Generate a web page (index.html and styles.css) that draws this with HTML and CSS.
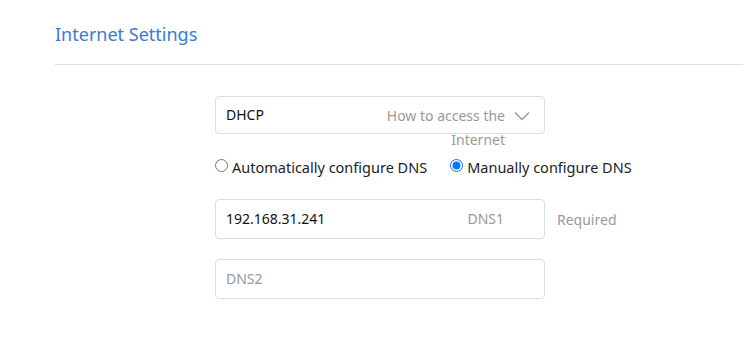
FILE: index.html
```html
<!DOCTYPE html>
<html lang="en">
<head>
    <meta charset="UTF-8">
    <meta name="viewport" content="width=device-width, initial-scale=1.0">
    <title>Internet Settings</title>
    <link rel="stylesheet" href="styles.css">
</head>
<body>
    <div class="page">
        <h1 class="page-title">Internet Settings</h1>
        <div class="divider"></div>

        <form class="settings-form">
            <div class="field select-field">
                <span class="field-value">DHCP</span>
                <span class="field-label">How to access the Internet</span>
                <svg class="chevron" width="16" height="10" viewBox="0 0 16 10">
                    <path d="M1 1.5 L8 8.5 L15 1.5" fill="none" stroke="#999" stroke-width="1.4"/>
                </svg>
            </div>

            <div class="radio-row">
                <label class="radio">
                    <input type="radio" name="dns" value="auto">
                    <span>Automatically configure DNS</span>
                </label>
                <label class="radio">
                    <input type="radio" name="dns" value="manual" checked>
                    <span>Manually configure DNS</span>
                </label>
            </div>

            <div class="field-row">
                <div class="field">
                    <span class="field-value">192.168.31.241</span>
                    <span class="field-label short">DNS1</span>
                </div>
                <span class="hint">Required</span>
            </div>

            <div class="field-row">
                <div class="field">
                    <span class="field-value placeholder">DNS2</span>
                </div>
            </div>
        </form>
    </div>
</body>
</html>
```

FILE: styles.css
```css
body {
    margin: 0;
    padding: 0;
    background-color: #ffffff;
    font-family: 'Noto Sans', 'Open Sans', sans-serif;
    color: #222222;
}

.page {
    padding-top: 20px;
}

.page-title {
    margin: 0 0 0 55px;
    font-size: 18px;
    font-weight: normal;
    line-height: 28px;
    color: #3a7bcf;
}

.divider {
    margin: 16px 0 0 55px;
    border-top: 1px solid #dddddd;
}

.settings-form {
    display: flex;
    flex-direction: column;
    margin: 31px 0 0 215px;
}

.field-row {
    display: flex;
    align-items: center;
    gap: 12px;
}

.field {
    box-sizing: border-box;
    width: 330px;
    height: 40px;
    padding: 0 10px;
    border: 1px solid #dddddd;
    border-radius: 4px;
    display: flex;
    align-items: center;
    font-size: 14px;
}

.select-field {
    height: 38px;
    align-items: flex-start;
    padding-top: 7px;
}

.field-value {
    flex: 1;
    line-height: 22px;
    color: #111111;
}

.field-value.placeholder {
    color: #999999;
}

.field-label {
    width: 128px;
    text-align: right;
    line-height: 24px;
    color: #999999;
}

.field-label.short {
    width: auto;
    margin-right: 30px;
}

.chevron {
    margin: 7px 4px 0 9px;
}

.radio-row {
    display: flex;
    gap: 23px;
    margin: 23px 0 22px;
    font-size: 14.5px;
}

.radio {
    display: flex;
    align-items: center;
}

.radio input {
    margin: 0 4px 4px 0;
    width: 13px;
    height: 13px;
}

.hint {
    font-size: 14px;
    color: #999999;
}

.field-row + .field-row {
    margin-top: 20px;
}
```
